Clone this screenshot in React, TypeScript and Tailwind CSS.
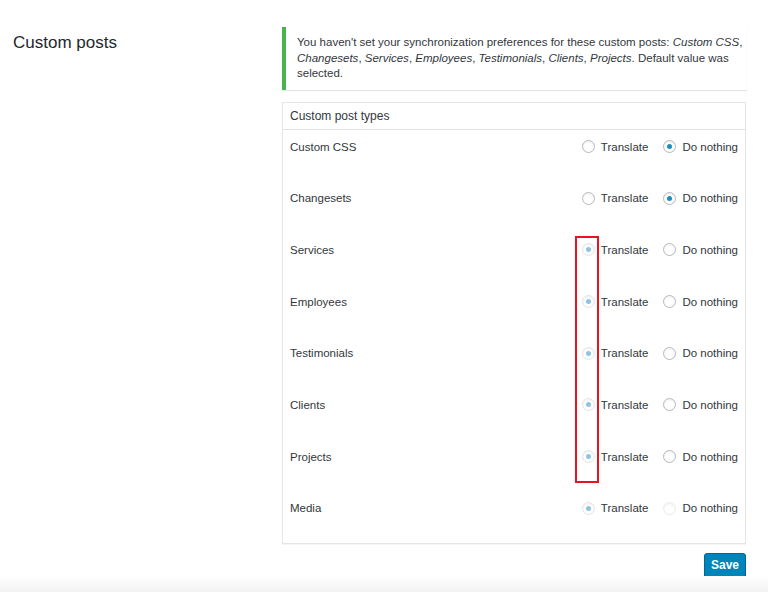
import React from 'react'

type Choice = 'translate' | 'nothing'

const rows: { name: string; value: Choice; disabled?: boolean }[] = [
  { name: 'Custom CSS', value: 'nothing' },
  { name: 'Changesets', value: 'nothing' },
  { name: 'Services', value: 'translate', disabled: true },
  { name: 'Employees', value: 'translate', disabled: true },
  { name: 'Testimonials', value: 'translate', disabled: true },
  { name: 'Clients', value: 'translate', disabled: true },
  { name: 'Projects', value: 'translate', disabled: true },
  { name: 'Media', value: 'translate', disabled: true },
]

function Radio({ checked, disabled, faint }: { checked: boolean; disabled?: boolean; faint?: boolean }) {
  const border = faint ? 'border-[#ececec]' : disabled && checked ? 'border-[#e2e4e7]' : 'border-[#b4b9be]'
  const dot = disabled ? 'bg-[#8fc4e0]' : 'bg-[#1e8cbe]'
  return (
    <span
      className={`flex h-[13px] w-[13px] items-center justify-center rounded-full border bg-white shadow-[inset_0_1px_2px_rgba(0,0,0,0.07)] ${border}`}
    >
      {checked && <span className={`h-[5px] w-[5px] rounded-full ${dot}`} />}
    </span>
  )
}

export default function App() {
  return (
    <div className="relative h-[592px] w-[768px] overflow-hidden bg-white font-['Liberation_Sans',Arial,sans-serif] text-[#32373c]">
      <div className="flex">
        <div className="w-[282px] shrink-0 pl-[13px] pt-[33px]">
          <h2 className="text-[17px] leading-[20px] text-[#23282d]">Custom posts</h2>
        </div>

        <div className="w-[465px] shrink-0 pt-[27px]">
          <div className="border-l-[4px] border-[#46b450] bg-white py-[8px] pl-[11px] pr-[2px] text-[11.5px] leading-[15.5px] shadow-[0_1px_1px_rgba(0,0,0,0.1)]">
            You haven't set your synchronization preferences for these custom posts:{' '}
            <em>Custom CSS</em>, <em>Changesets</em>, <em>Services</em>, <em>Employees</em>,{' '}
            <em>Testimonials</em>, <em>Clients</em>, <em>Projects</em>. Default value was selected.
          </div>

          <div className="relative mt-[12px] w-[464px] border border-[#e5e5e5] shadow-[0_1px_1px_rgba(0,0,0,0.04)]">
            <div className="border-b border-[#e1e1e1] px-[7px] py-[6px] text-[12px] leading-[14px]">Custom post types</div>
            {rows.map((row, i) => (
              <div key={row.name} className="flex h-[51.7px] items-start px-[7px] pt-[10px] text-[11.5px] leading-[14px]">
                <span className="flex-1 text-[#32373c]">{row.name}</span>
                <label className="flex items-center gap-[6px]">
                  <Radio checked={row.value === 'translate'} disabled={row.disabled} />
                  <span>Translate</span>
                </label>
                <label className="ml-[15px] flex items-center gap-[6px]">
                  <Radio checked={row.value === 'nothing'} faint={i === rows.length - 1} />
                  <span>Do nothing</span>
                </label>
              </div>
            ))}
            {/* highlight box */}
            <div className="pointer-events-none absolute left-[292px] top-[133px] h-[247px] w-[24px] border-2 border-[#e8141e]" />
          </div>

          <div className="mt-[9px] flex justify-end pr-[1px]">
            <button className="h-[24px] rounded-[3px] border border-[#006799] bg-[#0085ba] px-[6px] text-[12px] font-bold text-white shadow-[0_1px_0_#006799]">
              Save
            </button>
          </div>
        </div>
      </div>
      <div className="absolute bottom-0 left-0 h-[16px] w-full bg-gradient-to-b from-white to-[#f3f3f3]" />
    </div>
  )
}
